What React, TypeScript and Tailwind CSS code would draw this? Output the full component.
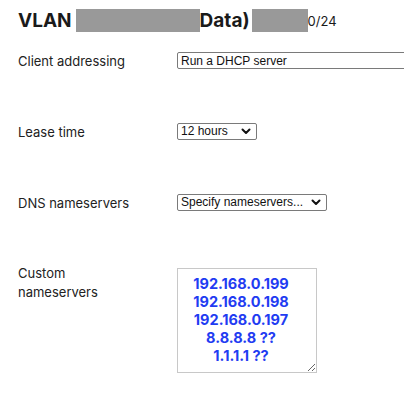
import React from 'react';

const Chevron = () => (
  <svg width="10" height="7" viewBox="0 0 10 7" className="pointer-events-none absolute right-[6px] top-[5px]">
    <path d="M1.5 1.5 L5 5 L8.5 1.5" fill="none" stroke="#111" strokeWidth="2" strokeLinecap="round" strokeLinejoin="round" />
  </svg>
);

const Select: React.FC<{ value: string; width: string }> = ({ value, width }) => (
  <div className={`relative flex shrink-0 ${width}`}>
    <select
      defaultValue={value}
      className="block h-[17px] w-full appearance-none rounded-[2px] border border-[#7a7a7a] bg-white pl-[3px] pr-[18px] text-[12px] leading-[15px] text-[#111] font-['Liberation_Sans',Arial,sans-serif] outline-none"
    >
      <option>{value}</option>
    </select>
    <Chevron />
  </div>
);

const nameservers = ['192.168.0.199', '192.168.0.198', '192.168.0.197', '8.8.8.8 ??', '1.1.1.1 ??'];

export default function App() {
  return (
    <div className="h-[407px] w-[404px] overflow-hidden bg-white pl-[18px] pt-[9px] text-[#222] font-['Inter','Noto_Sans',sans-serif]">
      <h1 className="flex h-[23px] items-center text-[19px] font-bold leading-[23px] text-[#1a1a1a]">
        <span>VLAN</span>
        <span className="ml-[4px] h-[23px] w-[124px] bg-[#999999]" />
        <span>Data)</span>
        <span className="ml-[2px] h-[23px] w-[56px] bg-[#999999]" />
        <span className="pt-[2px] text-[13px] font-normal">0/24</span>
      </h1>

      <div className="mt-[20px] flex flex-col">
        <div className="flex h-[17px] items-center">
          <label className="w-[159px] shrink-0 text-[13px] leading-[16px]">Client addressing</label>
          <input
            readOnly
            value="Run a DHCP server"
            className="block h-[17px] w-[260px] shrink-0 rounded-[2px] border border-[#7a7a7a] px-[3px] text-[12px] text-[#111] font-['Liberation_Sans',Arial,sans-serif] outline-none"
          />
        </div>

        <div className="mt-[54px] flex h-[17px] items-center">
          <label className="w-[159px] shrink-0 text-[13px] leading-[16px]">Lease time</label>
          <Select value="12 hours" width="w-[80px]" />
        </div>

        <div className="mt-[54px] flex h-[17px] items-center">
          <label className="w-[159px] shrink-0 text-[13px] leading-[16px]">DNS nameservers</label>
          <Select value="Specify nameservers..." width="w-[150px]" />
        </div>

        <div className="mt-[57px] flex items-start">
          <label className="-mt-[4px] w-[159px] shrink-0 text-[13px] leading-[19px]">
            Custom
            <br />
            nameservers
          </label>
          <textarea
            readOnly
            value={nameservers.join('\n')}
            className="block h-[105px] w-[140px] shrink-0 resize border border-[#c8c8c8] pl-[2px] pr-[14px] pt-[6px] text-center text-[14.5px] font-bold leading-[18px] text-[#1f3cf2] outline-none"
          />
        </div>
      </div>
    </div>
  );
}
